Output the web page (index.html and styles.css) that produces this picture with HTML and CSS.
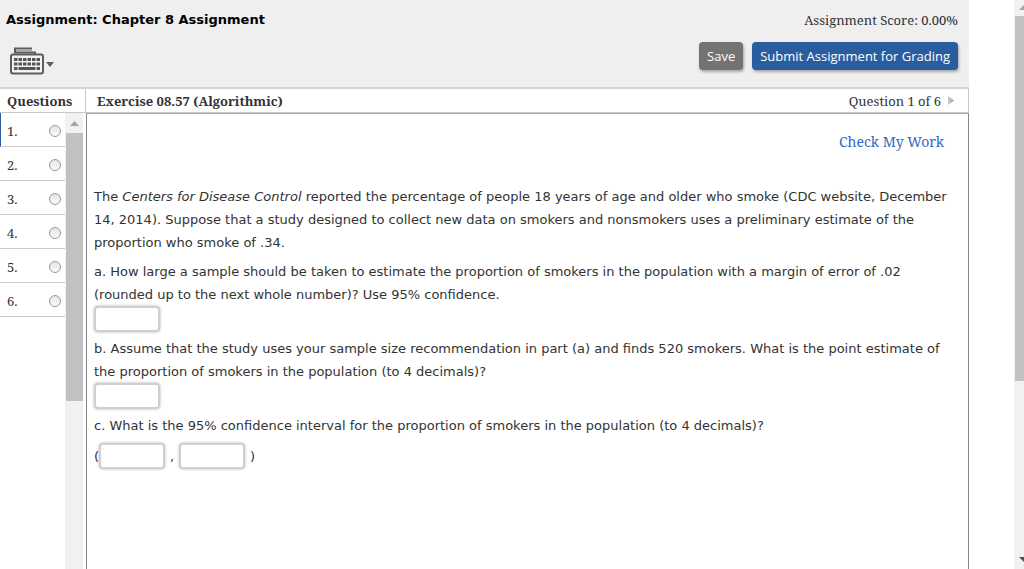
FILE: index.html
```html
<!DOCTYPE html>
<html lang="en">
<head>
    <meta charset="UTF-8">
    <meta name="viewport" content="width=device-width, initial-scale=1.0">
    <title>Assignment: Chapter 8 Assignment</title>
    <link rel="stylesheet" href="styles.css">
</head>
<body>
    <div class="page">
        <div class="app">
            <header class="top">
                <div class="top-row">
                    <h1>Assignment: Chapter 8 Assignment</h1>
                    <span class="score">Assignment Score: 0.00%</span>
                </div>
                <div class="top-row">
                    <button class="keyboard" type="button" aria-label="Keyboard shortcuts">
                        <svg width="46" height="30" viewBox="0 0 46 30">
                            <path d="M23 2.500H6v4h20v3" fill="none" stroke="#5c5c5c" stroke-width="2"/>
                            <path d="M7 4.500h16" stroke="#aaa" stroke-width="2"/>
                            <rect x="2" y="8.500" width="32" height="19" rx="2" fill="#f4f4f4" stroke="#5c5c5c" stroke-width="2"/>
                            <path d="M5 13.500h26M5 18h26" stroke="#555" stroke-width="3" stroke-dasharray="3.500 1"/>
                            <path d="M5 22.500h3.500M9.500 22.500h17M27.500 22.500h3.500" stroke="#555" stroke-width="3"/>
                            <path d="M37 16h8l-4 5z" fill="#5c5c5c"/>
                        </svg>
                    </button>
                    <div class="actions">
                        <button class="btn save" type="button">Save</button>
                        <button class="btn submit" type="button">Submit Assignment for Grading</button>
                    </div>
                </div>
            </header>

            <div class="title-bar">
                <h2 class="side-title">Questions</h2>
                <h2 class="exercise">Exercise 08.57 (Algorithmic)</h2>
                <span class="position">Question 1 of 6</span>
                <button class="next" type="button" aria-label="Next question">
                    <svg width="6" height="9" viewBox="0 0 6 9">
                        <defs>
                            <linearGradient id="shade"><stop offset="0" stop-color="#d0d0d0"/><stop offset="1" stop-color="#999"/></linearGradient>
                        </defs>
                        <path d="M0 0l6 4.500-6 4.500z" fill="url(#shade)"/>
                    </svg>
                </button>
            </div>

            <div class="content">
                <nav class="sidebar">
                    <ul class="questions">
                        <li class="current"><label for="q1">1.</label><input type="radio" name="question" id="q1"></li>
                        <li><label for="q2">2.</label><input type="radio" name="question" id="q2"></li>
                        <li><label for="q3">3.</label><input type="radio" name="question" id="q3"></li>
                        <li><label for="q4">4.</label><input type="radio" name="question" id="q4"></li>
                        <li><label for="q5">5.</label><input type="radio" name="question" id="q5"></li>
                        <li><label for="q6">6.</label><input type="radio" name="question" id="q6"></li>
                    </ul>
                    <div class="side-scroll">
                        <svg width="9" height="5" viewBox="0 0 9 5"><path d="M0 5l4.500-5 4.500 5z" fill="#a3a3a3"/></svg>
                        <div class="thumb"></div>
                    </div>
                </nav>

                <main class="exercise-body">
                    <a class="check" href="#">Check My Work</a>
                    <p>The <em>Centers for Disease Control</em> reported the percentage of people 18 years of age and older who smoke (CDC website, December 14, 2014). Suppose that a study designed to collect new data on smokers and nonsmokers uses a preliminary estimate of the proportion who smoke of .34.</p>
                    <div class="part">
                        <label for="a">a. How large a sample should be taken to estimate the proportion of smokers in the population with a margin of error of .02 (rounded up to the next whole number)? Use 95% confidence.</label>
                        <input class="answer" type="text" id="a">
                    </div>
                    <div class="part">
                        <label for="b">b. Assume that the study uses your sample size recommendation in part (a) and finds 520 smokers. What is the point estimate of the proportion of smokers in the population (to 4 decimals)?</label>
                        <input class="answer" type="text" id="b">
                    </div>
                    <p id="c">c. What is the 95% confidence interval for the proportion of smokers in the population (to 4 decimals)?</p>
                    <div class="interval">
                        <span>(</span>
                        <input class="answer" type="text" aria-labelledby="c">
                        <span class="comma">,</span>
                        <input class="answer" type="text" aria-labelledby="c">
                        <span class="close">)</span>
                    </div>
                </main>
            </div>
        </div>

        <div class="page-scroll">
            <svg class="arrow-up" width="9" height="5" viewBox="0 0 9 5"><path d="M0 5l5-5 4 4v1z" fill="#a3a3a3"/></svg>
            <div class="page-thumb"></div>
            <svg class="arrow-down" width="5" height="5" viewBox="0 0 5 5"><path d="M0 0h5v5z" fill="#505050"/></svg>
        </div>
    </div>
</body>
</html>
```
FILE: styles.css
```css
* {
    box-sizing: border-box;
}
body {
    margin: 0;
    background: #fff;
    color: #333;
    font-family: "Noto Serif", "Droid Serif", "Liberation Serif", serif;
    font-size: 13px;
}
h1, h2, p, ul {
    margin: 0;
    padding: 0;
}
button {
    border: none;
    padding: 0;
    background: none;
    cursor: pointer;
}
svg {
    display: block;
}
.page {
    display: flex;
    gap: 45px;
    height: 100vh;
    overflow: hidden;
}
.app {
    flex: 1;
    display: flex;
    flex-direction: column;
}

/* header */
.top {
    height: 89px;
    padding: 9px 11px 0 6px;
    background: #efefef;
    border-bottom: 2px solid #d3d3d3;
}
.top-row {
    display: flex;
    justify-content: space-between;
    align-items: flex-start;
}
h1 {
    color: #000;
    font: bold 13px/22px "DejaVu Sans", Verdana, sans-serif;
}
.score {
    line-height: 22px;
}
.keyboard {
    margin: 15px 0 0 3px;
}
.actions {
    display: flex;
    gap: 9px;
    margin-top: 11px;
}
.btn {
    height: 28px;
    padding: 0 8px;
    border-radius: 4px;
    color: #fff;
    font: 13px "Open Sans", sans-serif;
    box-shadow: 1px 2px 3px rgba(0,0,0,0.3);
}
.save {
    background: #737373;
}
.submit {
    background: #2a5d9f;
}

/* exercise title row */
.title-bar {
    display: flex;
    align-items: center;
    height: 24px;
    padding-right: 14px;
    border-right: 1px solid #c8c8c8;
    border-bottom: 1px solid #c8c8c8;
}
h2 {
    font-size: 13px;
    line-height: 24px;
}
.side-title {
    width: 86px;
    padding-left: 7px;
    border-right: 1px solid #c8c8c8;
}
.exercise {
    flex: 1;
    padding-left: 11px;
}
.next {
    margin-left: 7px;
}

.content {
    display: flex;
    flex: 1;
}
.sidebar {
    display: flex;
    width: 86px;
}
.questions {
    flex: 1;
    list-style: none;
}
.questions li {
    display: flex;
    justify-content: space-between;
    align-items: center;
    height: 34px;
    padding: 2px 4px 0 7px;
    border-bottom: 1px solid #ccc;
}
.questions .current {
    padding-left: 6px;
    border-left: 1px solid #2a5d9f;
}
.questions input {
    appearance: none;
    width: 12px;
    height: 12px;
    margin: 0;
    border: 1px solid #999;
    border-radius: 50%;
    background: linear-gradient(#e4e4e4, #fafafa);
}
.side-scroll {
    width: 18px;
    margin-right: 3px;
    padding: 8px 0 0 1px;
    background: #f1f1f1;
}
.side-scroll svg {
    margin: 0 auto 7px;
}
.thumb {
    height: 268px;
    background: #c1c1c1;
}

/* question text */
.exercise-body {
    flex: 1;
    padding: 17px 12px 0 7px;
    border: 1px solid #888;
    border-top-color: #aaa;
    border-bottom: none;
    font: 13px/23px "DejaVu Sans", Verdana, sans-serif;
}
.check {
    display: block;
    margin: 0 12px 32px 0;
    color: #3169c6;
    font: 14px/22px "Noto Serif", "Droid Serif", "Liberation Serif", serif;
    text-align: right;
    text-decoration: none;
}
.exercise-body p {
    margin-bottom: 6px;
}
.part {
    margin-bottom: 5px;
}
.part label {
    display: block;
}
.answer {
    display: block;
    width: 66px;
    height: 26px;
    border: 2px solid #d0d0d0;
    border-radius: 4px;
    background: #fff;
    box-shadow: 0 0 3px rgba(0,0,0,0.3);
}
.interval {
    display: flex;
    align-items: center;
}
.comma {
    width: 14px;
    padding-left: 5px;
}
.close {
    padding-left: 5px;
}

/* page scrollbar */
.page-scroll {
    display: flex;
    flex-direction: column;
    width: 10px;
    padding: 5px 0 7px 1px;
    background: #f1f1f1;
}
.arrow-up {
    margin: 0 0 6px 4px;
}
.page-thumb {
    height: 365px;
    background: #c1c1c1;
}
.arrow-down {
    margin: auto 0 0 4px;
}
```
